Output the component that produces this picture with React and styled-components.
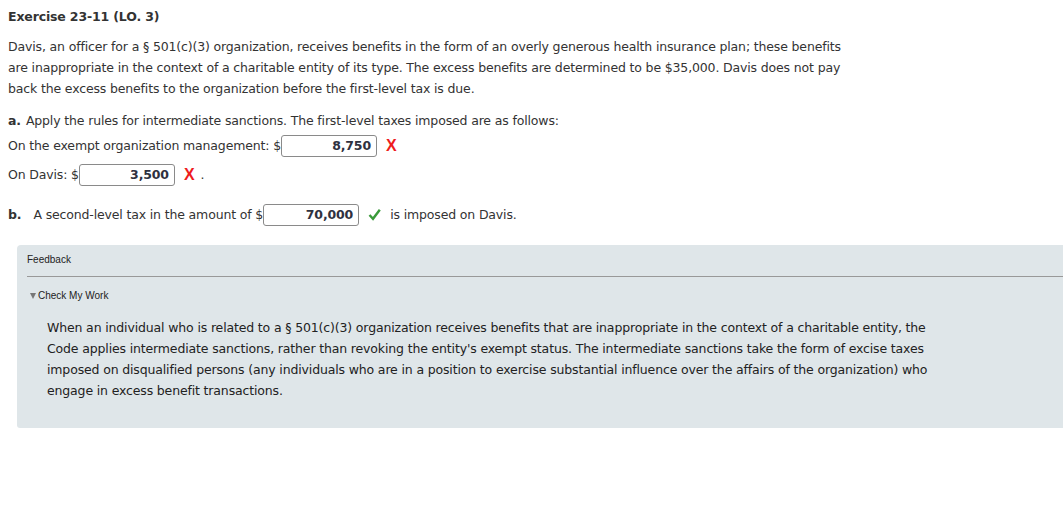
import React from 'react';
import styled, { createGlobalStyle } from 'styled-components';

const GlobalStyle = createGlobalStyle`
  html, body {
    margin: 0;
    padding: 0;
    background: #fff;
  }
  body {
    font-family: Verdana, "DejaVu Sans", sans-serif;
    font-size: 12.5px;
    letter-spacing: -0.15px;
    color: #333;
  }
`;

const Page = styled.div`
  padding: 6px 0 0 8px;
  width: 1055px;
  overflow: hidden;
`;

const Title = styled.div`
  font-weight: bold;
  line-height: 21px;
  margin-bottom: 9px;
`;

const Paragraph = styled.p`
  margin: 0;
  line-height: 21px;
  width: 836px;
`;

const Line = styled.div`
  display: flex;
  align-items: center;
  height: ${p => p.h || 25}px;
  margin-top: ${p => p.mt || 0}px;
  white-space: nowrap;
`;

const Label = styled.b`
  margin-right: ${p => p.gap || 5}px;
`;

const AnswerBox = styled.span`
  display: inline-flex;
  align-items: center;
  justify-content: flex-end;
  box-sizing: border-box;
  width: 96px;
  height: 22px;
  padding: 0 5px;
  border: 1px solid #8a8a8a;
  border-radius: 3px;
  font-weight: bold;
  color: #2f3140;
  background: #fff;
`;

const Wrong = styled.span`
  color: #ee1c1c;
  font-family: Arial, "Liberation Sans", sans-serif;
  font-weight: bold;
  font-size: 16px;
  margin-left: 9px;
`;

const Dot = styled.span`
  margin-left: 6px;
`;

const Right = styled.span`
  display: inline-flex;
  margin: 0 9px 0 9px;
`;

const Panel = styled.div`
  margin: 7px 0 0 9px;
  background: #dfe6e9;
  border-top-left-radius: 4px;
  border-bottom-left-radius: 3px;
  padding: 9px 0 27px 10px;
`;

const PanelTitle = styled.div`
  font-family: Arial, "Liberation Sans", sans-serif;
  font-size: 10px;
  letter-spacing: 0;
  color: #222;
  line-height: 12px;
  padding-bottom: 10px;
  border-bottom: 1px solid #999;
`;

const Toggle = styled.div`
  font-family: Arial, "Liberation Sans", sans-serif;
  font-size: 10px;
  letter-spacing: 0;
  color: #222;
  margin: 13px 0 0 3px;
  display: flex;
  align-items: center;
  gap: 2px;
`;

const Arrow = styled.span`
  width: 0;
  height: 0;
  border-left: 3px solid transparent;
  border-right: 3px solid transparent;
  border-top: 6px solid #777;
`;

const Explanation = styled.p`
  margin: 16px 0 0 20px;
  width: 892px;
  line-height: 21px;
  color: #222;
`;

const Check = () => (
  <svg width="13" height="13" viewBox="0 0 13 13">
    <path d="M1.5 7 L5 10.8 L11.8 1.8" fill="none" stroke="#3a9a3a" strokeWidth="2.4" />
  </svg>
);

export default function App() {
  return (
    <>
      <GlobalStyle />
      <Page>
        <Title>Exercise 23-11 (LO. 3)</Title>
        <Paragraph>
          Davis, an officer for a § 501(c)(3) organization, receives benefits in the form of an overly generous health insurance plan; these benefits
          are inappropriate in the context of a charitable entity of its type. The excess benefits are determined to be $35,000. Davis does not pay
          back the excess benefits to the organization before the first-level tax is due.
        </Paragraph>
        <Line mt={9}>
          <Label>a.</Label>Apply the rules for intermediate sanctions. The first-level taxes imposed are as follows:
        </Line>
        <Line>
          On the exempt organization management: $<AnswerBox>8,750</AnswerBox><Wrong>X</Wrong>
        </Line>
        <Line h={33}>
          On Davis: $<AnswerBox>3,500</AnswerBox><Wrong>X</Wrong><Dot>.</Dot>
        </Line>
        <Line h={47}>
          <Label gap={12}>b.</Label>A second-level tax in the amount of $<AnswerBox>70,000</AnswerBox>
          <Right><Check /></Right>is imposed on Davis.
        </Line>
        <Panel>
          <PanelTitle>Feedback</PanelTitle>
          <Toggle><Arrow />Check My Work</Toggle>
          <Explanation>
            When an individual who is related to a § 501(c)(3) organization receives benefits that are inappropriate in the context of a charitable entity, the
            Code applies intermediate sanctions, rather than revoking the entity's exempt status. The intermediate sanctions take the form of excise taxes
            imposed on disqualified persons (any individuals who are in a position to exercise substantial influence over the affairs of the organization) who
            engage in excess benefit transactions.
          </Explanation>
        </Panel>
      </Page>
    </>
  );
}
